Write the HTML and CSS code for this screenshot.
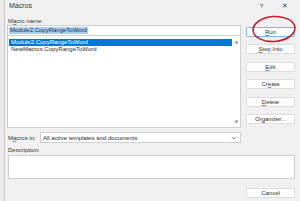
FILE: index.html
```html
<!DOCTYPE html>
<html>
<head>
<meta charset="utf-8">
<link rel="stylesheet" href="styles.css">
</head>
<body>
<div class="window">
  <div class="titlebar">
    <span class="title">Macros</span>
    <span class="tb-btns"><span class="help">?</span><span class="close">✕</span></span>
  </div>
  <div class="main">
    <div class="left">
      <div class="label">M<u>a</u>cro name:</div>
      <div class="input"><span class="sel">Module2.CopyRangeToWord</span></div>
      <div class="list">
        <div class="items">
          <div class="item active">Module2.CopyRangeToWord</div>
          <div class="item">NewMacros.CopyRangeToWord</div>
        </div>
        <div class="scroll">
          <svg width="5" height="4" viewBox="0 0 5 4"><path d="M0.5 3.5 L2.5 0.8 L4.5 3.5Z" fill="#8a8a8a"/></svg>
          <svg width="5" height="4" viewBox="0 0 5 4"><path d="M0.5 0.5 L2.5 3.2 L4.5 0.5Z" fill="#8a8a8a"/></svg>
        </div>
      </div>
    </div>
    <div class="buttons">
      <div class="btn default"><u>R</u>un</div>
      <div class="btn"><u>S</u>tep Into</div>
      <div class="btn"><u>E</u>dit</div>
      <div class="btn">Cr<u>e</u>ate</div>
      <div class="btn"><u>D</u>elete</div>
      <div class="btn">Or<u>g</u>anizer...</div>
    </div>
  </div>
  <div class="macros-in">
    <span class="label">M<u>a</u>cros in:</span>
    <div class="combo">
      <span>All active templates and documents</span>
      <svg width="6" height="4" viewBox="0 0 6 4"><path d="M0.8 0.8 L3 3 L5.2 0.8" fill="none" stroke="#777" stroke-width="0.8"/></svg>
    </div>
  </div>
  <div class="label desc-label">Description:</div>
  <div class="desc"></div>
  <div class="footer"><div class="btn">Cancel</div></div>
  <svg class="circle" width="52" height="32" viewBox="0 0 52 32"><ellipse cx="26" cy="15" rx="21" ry="12.5" fill="none" stroke="#b8232e" stroke-width="1.6" transform="rotate(-4 26 15)"/></svg>
</div>
</body>
</html>
```

FILE: styles.css
```css
html, body {
  margin: 0;
  padding: 0;
  width: 300px;
  height: 201px;
  overflow: hidden;
  background: #e9e9e9;
  font-family: "Liberation Sans", Arial, sans-serif;
  font-size: 6px;
  color: #2a2a2a;
}
u { text-decoration: underline; text-decoration-color: #888; text-underline-offset: 0.5px; text-decoration-thickness: 0.5px; }
.window {
  position: relative;
  margin-left: 4px;
  border-left: 1px solid #c9c9c9;
  height: 201px;
  background: #f0f0f0;
  padding-left: 2px;
  padding-right: 5px;
  box-sizing: border-box;
}
.titlebar {
  height: 17px;
  display: flex;
  align-items: flex-start;
  justify-content: space-between;
  padding-top: 2px;
  box-sizing: border-box;
}
.title { font-size: 7px; margin-left: 2px; line-height: 8px; color: #333; }
.tb-btns { display: flex; gap: 19px; margin-right: 7px; line-height: 8px; color: #444; }
.help { font-size: 6px; }
.close { font-size: 6.5px; }
.main {
  display: flex;
  gap: 5px;
}
.left { width: 234px; }
.label { line-height: 8px; height: 8px; margin-left: 1px; color: #333; }
.input {
  height: 11px;
  background: #fff;
  border: 1px solid #cfcfcf;
  box-sizing: border-box;
  padding-left: 1px;
  display: flex;
  align-items: center;
}
.sel { background: #a9cdf0; color: #1e2e46; line-height: 7px; padding: 0 1px; }
.list {
  height: 92px;
  background: #fff;
  border: 1px solid #cfcfcf;
  border-top: none;
  box-sizing: border-box;
  display: flex;
}
.items { flex: 1; padding: 3px 0 0 1px; }
.item { line-height: 7px; height: 7px; padding-left: 2px; }
.item.active { background: #0078d7; color: #fff; }
.scroll {
  width: 8px;
  display: flex;
  flex-direction: column;
  justify-content: space-between;
  align-items: center;
  padding: 4px 0 3px;
}
.buttons {
  padding-top: 10px;
  display: flex;
  flex-direction: column;
  gap: 7.4px;
}
.btn {
  width: 49px;
  height: 10px;
  box-sizing: border-box;
  background: #fdfdfd;
  border: 1px solid #dcdcdc;
  border-radius: 1px;
  text-align: center;
  line-height: 8px;
  color: #333;
}
.btn.default { border-color: #7fb8e6; }
.macros-in {
  display: flex;
  align-items: center;
  margin-top: 4px;
  height: 11px;
}
.macros-in .label { width: 32px; margin-left: 1px; height: auto; }
.combo {
  width: 201px;
  height: 11px;
  box-sizing: border-box;
  background: #fff;
  border: 1px solid #cfcfcf;
  display: flex;
  align-items: center;
  justify-content: space-between;
  padding: 0 3px 0 2px;
}
.desc-label { margin-top: 2px; height: 10px; line-height: 10px; }
.desc {
  height: 24px;
  background: #fff;
  border: 1px solid #cfcfcf;
  box-sizing: border-box;
  margin-left: 1px;
}
.footer {
  display: flex;
  justify-content: flex-end;
  margin-top: 9px;
}
.circle {
  position: absolute;
  left: 243px;
  top: 14px;
}
```
